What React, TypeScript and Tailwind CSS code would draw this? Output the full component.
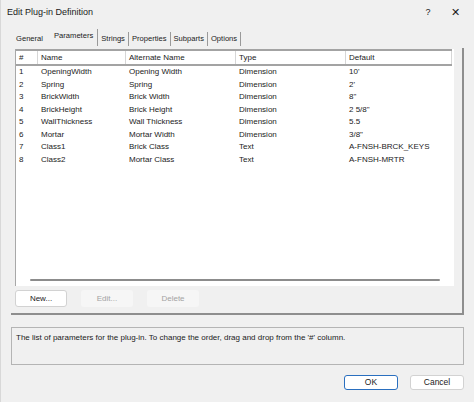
import React from 'react';

const rows = [
  ['1', 'OpeningWidth', 'Opening Width', 'Dimension', "10'"],
  ['2', 'Spring', 'Spring', 'Dimension', "2'"],
  ['3', 'BrickWidth', 'Brick Width', 'Dimension', '8"'],
  ['4', 'BrickHeight', 'Brick Height', 'Dimension', '2 5/8"'],
  ['5', 'WallThickness', 'Wall Thickness', 'Dimension', '5.5'],
  ['6', 'Mortar', 'Mortar Width', 'Dimension', '3/8"'],
  ['7', 'Class1', 'Brick Class', 'Text', 'A-FNSH-BRCK_KEYS'],
  ['8', 'Class2', 'Mortar Class', 'Text', 'A-FNSH-MRTR'],
];

const cols = ['w-[22px]', 'w-[88px]', 'w-[110px]', 'w-[110px]', 'w-[106px]'];
const headers = ['#', 'Name', 'Alternate Name', 'Type', 'Default'];
const tabs = ['General', 'Parameters', 'Strings', 'Properties', 'Subparts', 'Options'];

export default function App() {
  return (
    <div
      className="w-[474px] h-[402px] bg-[#f0f0f0] flex flex-col text-[#1b1b1b] overflow-hidden border-l border-[#d8d8d8]"
      style={{ fontFamily: '"Liberation Sans", Arial, sans-serif' }}
    >
      {/* title bar */}
      <div className="h-[25px] flex items-center pl-[6px] shrink-0">
        <span className="text-[9px]">Edit Plug-in Definition</span>
        <span className="ml-auto text-[9px] w-[10px] text-center">?</span>
        <span className="ml-[18px] mr-[14px] text-[11px] leading-none font-light">✕</span>
      </div>

      {/* tabs */}
      <div className="h-[21px] flex items-end pl-[12px] text-[7.6px] shrink-0">
        {tabs.map((t, i) => (
          <div
            key={t}
            className={
              'px-[3px] flex items-center border-r border-[#9a9a9a] ' +
              (t === 'Parameters' ? 'h-[17px] pb-[3px] pl-[6px] pr-[4px] ' : 'h-[14px] ') +
              (i === 0 ? 'border-r-0 pr-[5px]' : '')
            }
          >
            {t}
          </div>
        ))}
      </div>

      {/* tab panel */}
      <div className="mx-[10px] mt-[2px] h-[267px] border-r-2 border-b-2 border-[#8e8e8e] flex flex-col pl-[4px] pr-[8px] pt-[1px]">
        <div className="h-[237px] bg-white border-l border-[#a8a8a8] flex flex-col">
          <div className="flex h-[17px] border-t-2 border-b-2 border-[#a3a3a3] text-[8px] mr-[2px]">
            {headers.map((h, i) => (
              <div key={h} className={cols[i] + ' flex items-center pl-[3px] border-r border-[#d6d6d6] shrink-0'}>
                {h}
              </div>
            ))}
          </div>
          {rows.map((r) => (
            <div key={r[0]} className="flex h-[12.5px] items-center text-[8px]">
              {r.map((c, i) => (
                <div key={i} className={cols[i] + ' pl-[3px] shrink-0 whitespace-nowrap'}>
                  {c}
                </div>
              ))}
            </div>
          ))}
          <div className="mt-auto mb-[5px] ml-[14px] mr-[14px] h-[2px] bg-[#8c8c8c] rounded-full" />
        </div>

        <div className="flex gap-[14px] mt-[4px] text-[8px]">
          <button className="w-[52px] h-[17px] bg-white border border-[#d2d2d2] rounded-[3px]">New...</button>
          <button className="w-[52px] h-[17px] bg-[#f6f6f6] text-[#a3a3a3] rounded-[3px]">Edit...</button>
          <button className="w-[52px] h-[17px] bg-[#f6f6f6] text-[#a3a3a3] rounded-[3px]">Delete</button>
        </div>
      </div>

      {/* description */}
      <div className="mx-[10px] mt-[12px] h-[38px] border border-[#b4b4b4] px-[4px] pt-[4px] text-[8px] shrink-0">
        The list of parameters for the plug-in. To change the order, drag and drop from the '#' column.
      </div>

      {/* footer buttons */}
      <div className="flex justify-end gap-[12px] mr-[10px] mt-[10px] text-[8.5px]">
        <button className="w-[54px] h-[15px] bg-white border border-[#2a6fbf] rounded-[3px]">OK</button>
        <button className="w-[54px] h-[15px] bg-white border border-[#d2d2d2] rounded-[3px]">Cancel</button>
      </div>
    </div>
  );
}
